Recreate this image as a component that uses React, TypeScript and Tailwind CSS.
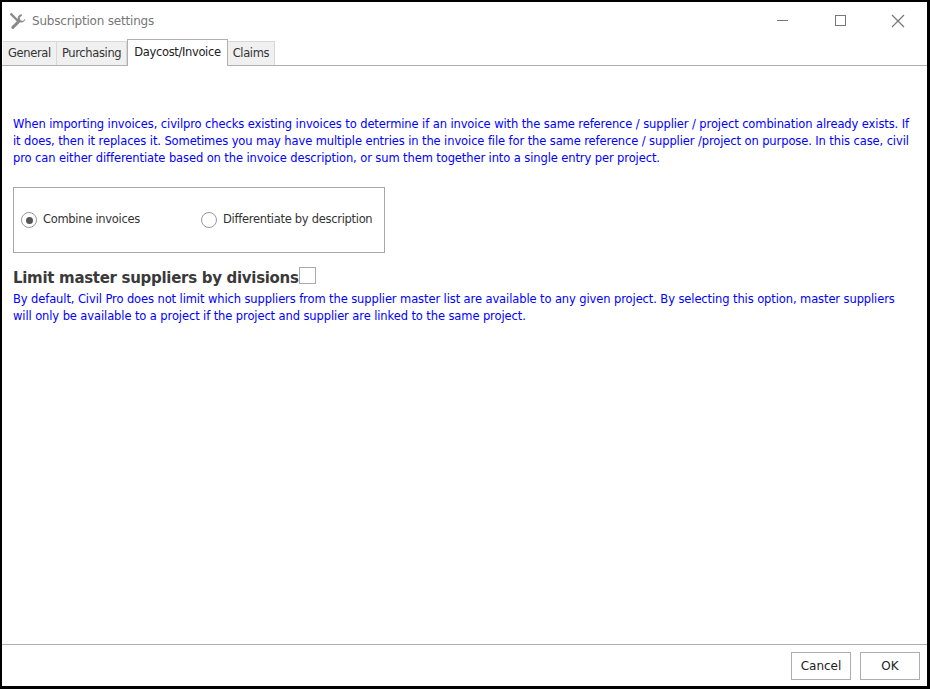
import React from 'react';

export default function App() {
  const tabs = ['General', 'Purchasing', 'Daycost/Invoice', 'Claims'];
  return (
    <div className="w-[930px] h-[689px] bg-black p-[2px] pr-[3px] pb-[3px]" style={{ fontFamily: '"DejaVu Sans", sans-serif' }}>
      <div className="w-full h-full bg-white flex flex-col text-[11px] text-[#333]">
        <div className="h-[37px] flex items-center pl-[6px] shrink-0">
          <svg width="20" height="20" viewBox="0 0 24 24" fill="#8a8a8a">
            <path d="M3 5l2-2 8 8-2 2z M2 4l2-2 2 2-2 2z" />
            <path d="M14.5 2a5 5 0 00-4.6 7l-7.4 7.4a1.8 1.8 0 002.6 2.6L12.5 11.6A5 5 0 0019 7l-3 3-3-1-1-3 3-3a5 5 0 00-.5-1z" transform="translate(2 2)" />
          </svg>
          <span className="ml-[4px] text-[12px] text-[#777] tracking-[-0.2px]">Subscription settings</span>
          <div className="ml-auto flex items-center h-full text-[#666]">
            <div className="w-[58px] flex justify-center"><div className="w-[11px] h-px bg-[#777]" /></div>
            <div className="w-[58px] flex justify-center"><div className="w-[11px] h-[11px] border border-[#777]" /></div>
            <div className="w-[58px] flex justify-center">
              <svg width="14" height="14" viewBox="0 0 14 14" stroke="#777" strokeWidth="1.2"><path d="M1 1l12 12M13 1L1 13" /></svg>
            </div>
          </div>
        </div>
        <div className="flex items-end h-[27px] border-b border-[#b0b0b0] shrink-0 pl-[1px]">
          {tabs.map((t, i) =>
            i === 2 ? (
              <div key={t} className="h-[27px] px-[6px] flex items-center bg-white border border-b-0 border-[#b0b0b0] -mb-px text-[#222] text-[11.5px] tracking-[-0.35px]">{t}</div>
            ) : (
              <div key={t} className="h-[24px] px-[5px] flex items-center bg-[#f0f0f0] border-r border-t border-[#d8d8d8] text-[#333] text-[11.5px] tracking-[-0.35px]">{t}</div>
            )
          )}
        </div>
        <div className="flex-1 px-[11px] pt-[50px]">
          <p className="text-[#0000ff] leading-[17px] text-[11.5px] tracking-[-0.1px]">
            When importing invoices, civilpro checks existing invoices to determine if an invoice with the same reference / supplier / project combination already exists. If it does, then it replaces it. Sometimes you may have multiple entries in the invoice file for the same reference / supplier /project on purpose. In this case, civil pro can either differentiate based on the invoice description, or sum them together into a single entry per project.
          </p>
          <div className="mt-[20px] w-[372px] h-[66px] border border-[#a8a8a8] flex items-center pl-[7px] text-[11.5px] tracking-[-0.3px] text-[#333] whitespace-nowrap">
            <div className="flex items-center w-[180px]">
              <span className="w-[16px] h-[16px] rounded-full border border-[#999] flex items-center justify-center"><span className="w-[7px] h-[7px] rounded-full bg-[#555]" /></span>
              <span className="ml-[6px]">Combine invoices</span>
            </div>
            <div className="flex items-center">
              <span className="w-[16px] h-[16px] rounded-full border border-[#999]" />
              <span className="ml-[6px]">Differentiate by description</span>
            </div>
          </div>
          <div className="mt-[14px] flex items-center">
            <span className="font-bold text-[15px] tracking-[-0.3px] text-[#3a3a3a]">Limit master suppliers by divisions</span>
            <span className="w-[17px] h-[17px] border border-[#aaa] -mt-[6px]" />
          </div>
          <p className="text-[#0000ff] leading-[17px] text-[11.5px] tracking-[-0.1px] mt-[1px]">
            By default, Civil Pro does not limit which suppliers from the supplier master list are available to any given project. By selecting this option, master suppliers will only be available to a project if the project and supplier are linked to the same project.
          </p>
        </div>
        <div className="h-[42px] border-t border-[#b0b0b0] flex items-center justify-end gap-[9px] pr-[7px] shrink-0">
          <button className="w-[60px] h-[28px] border border-[#adadad] bg-white text-[12px] text-[#222]">Cancel</button>
          <button className="w-[60px] h-[28px] border border-[#adadad] bg-white text-[12px] text-[#222]">OK</button>
        </div>
      </div>
    </div>
  );
}
